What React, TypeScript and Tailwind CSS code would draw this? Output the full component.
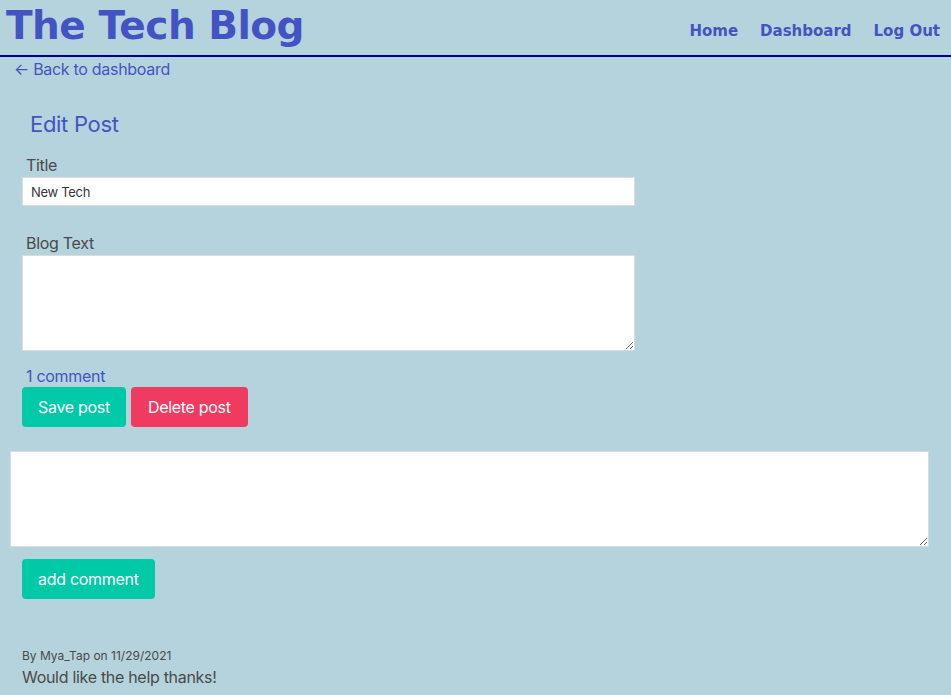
export default function App() {
    return (
        <div className="min-h-[695px] bg-[#b4d3dc] text-[#4a4a4a] tracking-[-0.3px]" style={{ fontFamily: 'Inter, Roboto, "Noto Sans", sans-serif' }}>
            {/* Header */}
            <header className="h-[57px] flex items-start justify-between border-b-2 border-[#00008b] tracking-normal">
                <h1 className="pl-[6px] pt-[1px] text-[39px] leading-[50px] font-bold text-[#4453c4] tracking-[-0.5px]" style={{ fontFamily: '"DejaVu Sans", sans-serif' }}>
                    The Tech Blog
                </h1>
                <nav className="flex gap-[22px] pr-[11px] pt-[20px] text-[15px] font-bold text-[#4453c4]" style={{ fontFamily: '"DejaVu Sans", sans-serif' }}>
                    <a>Home</a>
                    <a>Dashboard</a>
                    <a>Log Out</a>
                </nav>
            </header>

            <a className="block pl-[14px] pt-[1px] text-[16px] leading-[22px] text-[#4453c4]">← Back to dashboard</a>

            <main className="flex flex-col">
                <h2 className="pl-[30px] pt-[30px] text-[22px] leading-[28px] text-[#4453c4]">Edit Post</h2>

                <div className="pl-[22px] pt-[16px] flex flex-col">
                    <label className="pl-[4px] text-[16px] leading-[22px]">Title</label>
                    <input
                        defaultValue="New Tech"
                        className="mt-[1px] w-[613px] h-[29px] bg-white border border-[#dbdbdb] px-[8px] text-[13px] text-[#363636] outline-none"
                    />

                    <label className="pl-[4px] mt-[26px] text-[16px] leading-[22px]">Blog Text</label>
                    <textarea className="mt-[1px] w-[613px] h-[96px] bg-white border border-[#dbdbdb] outline-none block" />

                    <a className="pl-[4px] mt-[14px] text-[16px] leading-[22px] text-[#4453c4]">1 comment</a>

                    <div className="flex gap-[5px]">
                        <button className="h-[40px] px-[16px] rounded-[4px] bg-[#00c9a7] text-white text-[16px]">Save post</button>
                        <button className="h-[40px] px-[17px] rounded-[4px] bg-[#f03a5f] text-white text-[16px]">Delete post</button>
                    </div>
                </div>

                <div className="pl-[10px] pt-[24px]">
                    <textarea className="w-[919px] h-[96px] bg-white border border-[#dbdbdb] outline-none block" />
                </div>

                <div className="pl-[22px] pt-[12px]">
                    <button className="h-[40px] px-[16px] rounded-[4px] bg-[#00c9a7] text-white text-[16px]">add comment</button>
                </div>

                <div className="pl-[22px] pt-[48px] flex flex-col">
                    <p className="text-[12px] leading-[18px] tracking-normal">By Mya_Tap on 11/29/2021</p>
                    <p className="text-[16px] leading-[24px]">Would like the help thanks!</p>
                </div>
            </main>
        </div>
    );
}
